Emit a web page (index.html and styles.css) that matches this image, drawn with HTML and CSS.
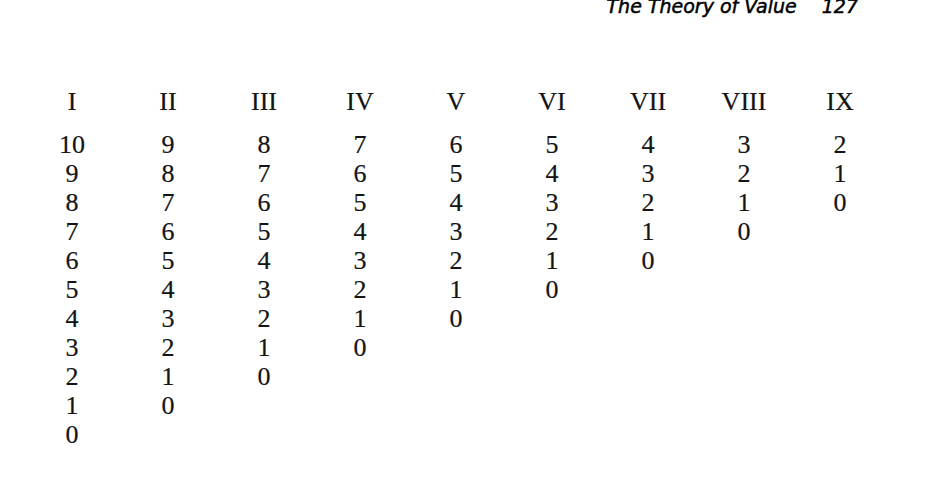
FILE: index.html
```html
<!DOCTYPE html>
<html>
<head>
<meta charset="utf-8">
<link rel="stylesheet" href="styles.css">
</head>
<body>
<div class="page">
  <header class="running-head">
    <span class="title">The Theory of Value</span><span class="folio">127</span>
  </header>
  <div class="table">
    <div class="col"><div class="numeral">I</div><div>10</div><div>9</div><div>8</div><div>7</div><div>6</div><div>5</div><div>4</div><div>3</div><div>2</div><div>1</div><div>0</div></div>
    <div class="col"><div class="numeral">II</div><div>9</div><div>8</div><div>7</div><div>6</div><div>5</div><div>4</div><div>3</div><div>2</div><div>1</div><div>0</div></div>
    <div class="col"><div class="numeral">III</div><div>8</div><div>7</div><div>6</div><div>5</div><div>4</div><div>3</div><div>2</div><div>1</div><div>0</div></div>
    <div class="col"><div class="numeral">IV</div><div>7</div><div>6</div><div>5</div><div>4</div><div>3</div><div>2</div><div>1</div><div>0</div></div>
    <div class="col"><div class="numeral">V</div><div>6</div><div>5</div><div>4</div><div>3</div><div>2</div><div>1</div><div>0</div></div>
    <div class="col"><div class="numeral">VI</div><div>5</div><div>4</div><div>3</div><div>2</div><div>1</div><div>0</div></div>
    <div class="col"><div class="numeral">VII</div><div>4</div><div>3</div><div>2</div><div>1</div><div>0</div></div>
    <div class="col"><div class="numeral">VIII</div><div>3</div><div>2</div><div>1</div><div>0</div></div>
    <div class="col"><div class="numeral">IX</div><div>2</div><div>1</div><div>0</div></div>
  </div>
</div>
</body>
</html>
```
FILE: styles.css
```css
html, body {
  margin: 0;
  padding: 0;
  background: #ffffff;
}
body {
  width: 940px;
  height: 492px;
  overflow: hidden;
  color: #141414;
}
.page {
  padding-left: 24px;
}
.running-head {
  display: flex;
  justify-content: flex-end;
  padding-right: 82px;
  margin-top: -3.5px;
  font-family: "DejaVu Sans", sans-serif;
  font-style: italic;
  font-size: 19px;
  line-height: 19px;
  height: 19px;
  color: #000;
  -webkit-text-stroke: 0.5px #000;
}
.folio {
  margin-left: 25px;
}
.table {
  display: grid;
  grid-template-columns: repeat(9, 96px);
  align-items: start;
  margin-top: 71px;
  font-family: "Liberation Serif", "Times New Roman", serif;
  font-size: 26px;
  line-height: 29px;
  -webkit-text-stroke: 0.2px #141414;
}
.col {
  display: flex;
  flex-direction: column;
  align-items: center;
}
.numeral {
  margin-bottom: 14px;
}
```
